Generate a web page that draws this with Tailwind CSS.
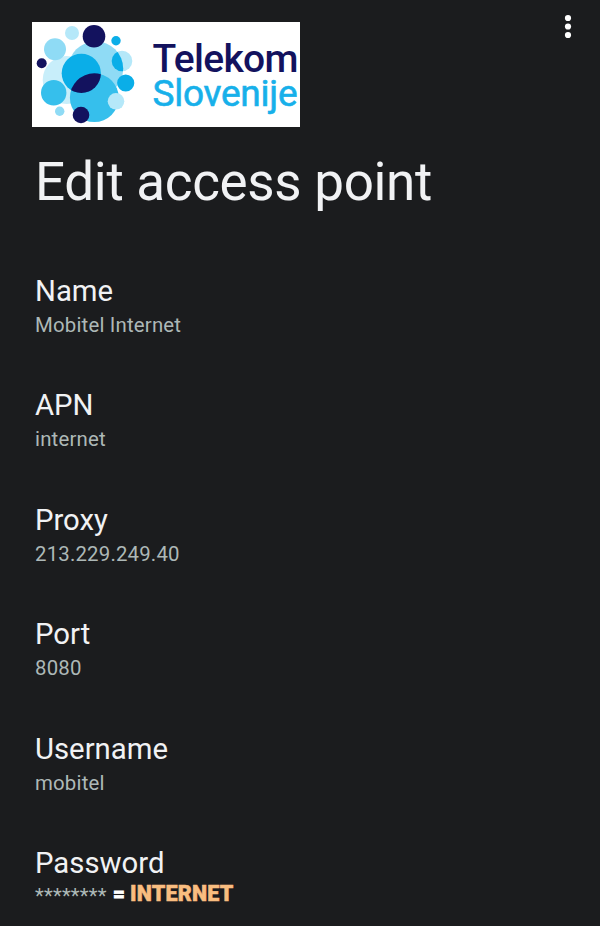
<!DOCTYPE html>
<html lang="en">
<head>
  <meta charset="UTF-8" />
  <meta name="viewport" content="width=device-width, initial-scale=1.0"/>
  <title>Edit access point</title>
  <script src="https://cdn.jsdelivr.net/npm/@tailwindcss/browser@4"></script>
</head>
<body class="bg-[#1b1c1e] font-[Roboto,sans-serif] text-[#f1f2f4]">
  <div class="h-[926px] overflow-hidden pl-8 pr-[27px]">
    <header class="flex items-start justify-between">
      <svg class="mt-[22px] bg-white" width="268" height="105" viewBox="0 0 268 105" role="img" aria-label="Telekom Slovenije">
        <defs>
          <clipPath id="mid"><circle cx="49.3" cy="51.3" r="19.6"/></clipPath>
          <clipPath id="big"><circle cx="63.7" cy="46.8" r="27.5"/></clipPath>
        </defs>
        <circle cx="34.7" cy="58" r="24" fill="#c8eefa"/>
        <circle cx="90" cy="39" r="10.3" fill="#b5e8f9"/>
        <circle cx="63.7" cy="46.8" r="27.5" fill="#8fdbf5"/>
        <circle cx="90" cy="39" r="10.3" fill="#0aaee8" clip-path="url(#big)"/>
        <circle cx="62.3" cy="75.7" r="24.4" fill="#36bfec"/>
        <circle cx="49.3" cy="51.3" r="19.6" fill="#0aaee8"/>
        <circle cx="62.3" cy="75.7" r="24.4" fill="#13125e" clip-path="url(#mid)"/>
        <circle cx="62" cy="14.3" r="11.3" fill="#13125e"/>
        <circle cx="40" cy="11" r="7" fill="#b5e8f9"/>
        <circle cx="84" cy="18.7" r="4.7" fill="#0aaee8"/>
        <circle cx="23" cy="27.3" r="11" fill="#8fdbf5"/>
        <circle cx="9.7" cy="41.3" r="5" fill="#13125e"/>
        <circle cx="21.7" cy="70.7" r="12.7" fill="#36bfec"/>
        <circle cx="93.7" cy="61" r="8.6" fill="#0aaee8"/>
        <circle cx="84" cy="79.3" r="8.3" fill="#b5e8f9"/>
        <circle cx="27.7" cy="89.3" r="4.7" fill="#8fdbf5"/>
        <circle cx="49" cy="93" r="8.3" fill="#13125e"/>
        <text x="120.5" y="49.5" font-size="39" font-weight="500" fill="#13125e" textLength="146" lengthAdjust="spacing">Telekom</text>
        <text x="120.5" y="83.6" font-size="37" fill="#17b0ea" stroke="#17b0ea" stroke-width=".6" textLength="145" lengthAdjust="spacing">Slovenije</text>
      </svg>
      <svg class="mt-3.5" width="10" height="26" viewBox="0 0 10 26" fill="#fff">
        <circle cx="5" cy="4" r="3.1"/>
        <circle cx="5" cy="12.5" r="3.1"/>
        <circle cx="5" cy="21" r="3.1"/>
      </svg>
    </header>

    <main class="pl-[3px]">
      <h1 class="mt-[23px] text-[53px] leading-[64px] tracking-[-0.33px]">Edit access point</h1>

      <dl class="mt-[60px] flex flex-col gap-[46.4px] text-[20.4px] leading-[34px] tracking-[0.18px] text-[#adb8b7]">
        <div>
          <dt class="text-[29.3px] leading-[34px] tracking-normal text-[#f1f2f4]">Name</dt>
          <dd>Mobitel Internet</dd>
        </div>
        <div>
          <dt class="text-[29.3px] leading-[34px] tracking-normal text-[#f1f2f4]">APN</dt>
          <dd>internet</dd>
        </div>
        <div>
          <dt class="text-[29.3px] leading-[34px] tracking-normal text-[#f1f2f4]">Proxy</dt>
          <dd>213.229.249.40</dd>
        </div>
        <div>
          <dt class="text-[29.3px] leading-[34px] tracking-normal text-[#f1f2f4]">Port</dt>
          <dd>8080</dd>
        </div>
        <div>
          <dt class="text-[29.3px] leading-[34px] tracking-normal text-[#f1f2f4]">Username</dt>
          <dd>mobitel</dd>
        </div>
        <div>
          <dt class="text-[29.3px] leading-[34px] tracking-normal text-[#f1f2f4]">Password</dt>
          <dd class="-mt-[3px] flex">
            <span class="w-[78px] pt-0.5">********</span>
            <span class="w-[17px] font-black text-white [-webkit-text-stroke:0.8px_#fff]">=</span>
            <span class="text-[21.5px] font-black tracking-[0.2px] text-[#f9bd80] [-webkit-text-stroke:0.5px_#f9bd80]">INTERNET</span>
          </dd>
        </div>
      </dl>
    </main>
  </div>
</body>
</html>
